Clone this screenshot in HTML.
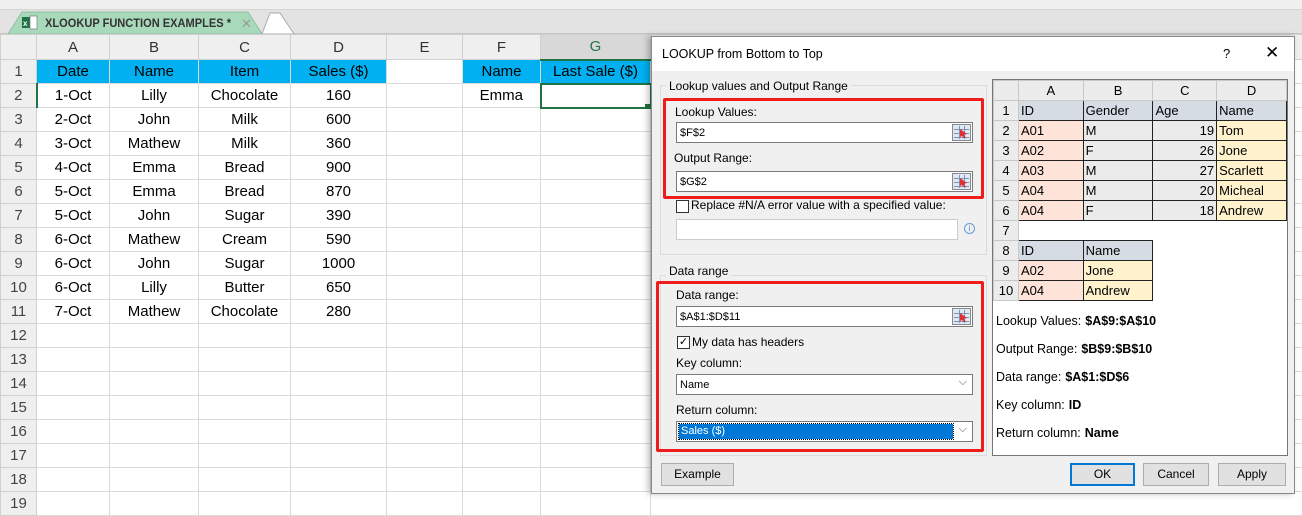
<!DOCTYPE html>
<html><head><meta charset="utf-8"><style>
*{box-sizing:border-box;margin:0;padding:0}
body{width:1302px;height:497px;overflow:hidden;background:#fff;position:relative;font-family:"Liberation Sans",sans-serif}
.a{position:absolute}
#top{left:0;top:0;width:1302px;height:10px;background:#f0f0f0;border-bottom:1px solid #d4d4d4}
#tabbar{left:0;top:10px;width:1302px;height:24px;background:#e3e3e3;border-bottom:1px solid #c6c6c6}
table.s{position:absolute;left:0;top:34px;border-collapse:collapse;table-layout:fixed;font-size:15px;color:#000;width:1302px}
table.s td{border:1px solid #dadada;height:24px;text-align:center;padding:0;white-space:nowrap;overflow:hidden}
table.s tr:first-child td{background:#efefef;color:#333;height:25px;border-color:#d0d0d0}
table.s td.h{background:#efefef;color:#444;border-color:#d0d0d0}
.b{background:#00b0f0}
#dlg{left:651px;top:36px;width:644px;height:458px;background:#f0f0f0;border:1px solid #888;box-shadow:-3px 0 6px rgba(0,0,0,.25);font-family:"Liberation Sans",sans-serif;font-size:12px;color:#000}
.grp{position:absolute;border:1px solid #dcdcdc}
.gl{position:absolute;background:#f0f0f0;padding:0 3px;font-size:12px}
.red{position:absolute;border:3px solid #f01c1c;border-radius:2px}
.inp{position:absolute;background:#fff;border:1px solid #7a7a7a;font-size:11px;padding:4px 3px;height:21px}
.rb{position:absolute;right:1px;top:1px;width:19px;height:17px;border:1px solid #888;background:#dfe8f3}
.lab{position:absolute;font-size:12px}
.chk{position:absolute;width:13px;height:13px;border:1px solid #333;background:#fff}
.btn{position:absolute;height:23px;border:1px solid #adadad;background:#e1e1e1;text-align:center;line-height:21px;font-size:12px}
.pv{position:absolute;left:340px;top:42px;width:296px;height:377px;background:#fff;border:1px solid #777}
table.p{border-collapse:collapse;table-layout:fixed;font-size:13px}
table.p td{height:20px;border:1px solid #d4d4d4;padding:0 2px;white-space:nowrap}
table.p tr:first-child td{background:#ececec;text-align:center;border-color:#c8c8c8}
table.p td.h{background:#ececec;text-align:center;border-color:#c8c8c8}
.k td.x{border:1px solid #222}
.pk{background:#fde3d8}.gy{background:#ebebeb}.yl{background:#fff2cc}.hd{background:#d6dce4}
.sm{position:absolute;left:3px;font-size:12.5px}
.sm b{margin-left:4px}
</style></head><body>
<div class="a" id="top"></div>
<div class="a" id="tabbar"></div>
<svg class="a" style="left:0;top:10px" width="300" height="25">
<polygon points="8,24 22,2 248,2 262,24" fill="#a9d9bb" stroke="#8fbfa1"/>
<polygon points="262,24 270,3 280,3 294,24" fill="#fff" stroke="#aaa"/>
<rect x="22" y="7" width="8" height="11" fill="#1e7145"/><text x="23" y="16" font-size="8" fill="#fff" font-family="Liberation Sans" font-weight="bold">x</text>
<rect x="30" y="6" width="7" height="13" fill="#fff" stroke="#777" stroke-width=".7"/>
<text x="45" y="17" font-size="12" font-family="Liberation Sans" font-weight="bold" fill="#333" textLength="186" lengthAdjust="spacingAndGlyphs">XLOOKUP FUNCTION EXAMPLES *</text>
<text x="241" y="18" font-size="13" fill="#999" font-family="DejaVu Sans">✕</text>
</svg>
<table class="s">
<colgroup><col style="width:36px"><col style="width:73px"><col style="width:89px"><col style="width:92px"><col style="width:96px"><col style="width:76px"><col style="width:78px"><col style="width:110px"><col style="width:652px"></colgroup>
<tr><td style="background:#efefef"></td><td>A</td><td>B</td><td>C</td><td>D</td><td>E</td><td>F</td><td style="background:#d8d8d8;color:#217346;border-bottom:2px solid #217346">G</td><td></td></tr>
<tr><td class="h">1</td><td class="b">Date</td><td class="b">Name</td><td class="b">Item</td><td class="b">Sales ($)</td><td></td><td class="b">Name</td><td class="b">Last Sale ($)</td><td></td></tr>
<tr><td class="h" style="border-right:2px solid #217346">2</td><td>1-Oct</td><td>Lilly</td><td>Chocolate</td><td>160</td><td></td><td>Emma</td><td style="border:2px solid #217346"></td><td></td></tr>
<tr><td class="h">3</td><td>2-Oct</td><td>John</td><td>Milk</td><td>600</td><td></td><td></td><td></td><td></td></tr>
<tr><td class="h">4</td><td>3-Oct</td><td>Mathew</td><td>Milk</td><td>360</td><td></td><td></td><td></td><td></td></tr>
<tr><td class="h">5</td><td>4-Oct</td><td>Emma</td><td>Bread</td><td>900</td><td></td><td></td><td></td><td></td></tr>
<tr><td class="h">6</td><td>5-Oct</td><td>Emma</td><td>Bread</td><td>870</td><td></td><td></td><td></td><td></td></tr>
<tr><td class="h">7</td><td>5-Oct</td><td>John</td><td>Sugar</td><td>390</td><td></td><td></td><td></td><td></td></tr>
<tr><td class="h">8</td><td>6-Oct</td><td>Mathew</td><td>Cream</td><td>590</td><td></td><td></td><td></td><td></td></tr>
<tr><td class="h">9</td><td>6-Oct</td><td>John</td><td>Sugar</td><td>1000</td><td></td><td></td><td></td><td></td></tr>
<tr><td class="h">10</td><td>6-Oct</td><td>Lilly</td><td>Butter</td><td>650</td><td></td><td></td><td></td><td></td></tr>
<tr><td class="h">11</td><td>7-Oct</td><td>Mathew</td><td>Chocolate</td><td>280</td><td></td><td></td><td></td><td></td></tr>
<tr><td class="h">12</td><td></td><td></td><td></td><td></td><td></td><td></td><td></td><td></td></tr>
<tr><td class="h">13</td><td></td><td></td><td></td><td></td><td></td><td></td><td></td><td></td></tr>
<tr><td class="h">14</td><td></td><td></td><td></td><td></td><td></td><td></td><td></td><td></td></tr>
<tr><td class="h">15</td><td></td><td></td><td></td><td></td><td></td><td></td><td></td><td></td></tr>
<tr><td class="h">16</td><td></td><td></td><td></td><td></td><td></td><td></td><td></td><td></td></tr>
<tr><td class="h">17</td><td></td><td></td><td></td><td></td><td></td><td></td><td></td><td></td></tr>
<tr><td class="h">18</td><td></td><td></td><td></td><td></td><td></td><td></td><td></td><td></td></tr>
<tr><td class="h">19</td><td></td><td></td><td></td><td></td><td></td><td></td><td></td><td></td></tr>
</table>
<div class="a" style="left:645px;top:104px;width:5px;height:5px;background:#217346"></div>

<div class="a" id="dlg">
<div class="a" style="left:0;top:0;width:642px;height:34px;background:#fff"></div>
<div class="lab" style="left:10px;top:10px;font-size:12.5px">LOOKUP from Bottom to Top</div>
<div class="lab" style="left:571px;top:9px;font-size:13px">?</div>
<div class="lab" style="left:613px;top:6px;font-size:17px">✕</div>

<div class="grp" style="left:8px;top:48px;width:327px;height:170px"></div>
<div class="gl" style="left:14px;top:42px">Lookup values and Output Range</div>
<div class="red" style="left:11px;top:61px;width:321px;height:101px"></div>
<div class="lab" style="left:23px;top:68px">Lookup Values:</div>
<div class="inp" style="left:24px;top:85px;width:297px">$F$2<div class="rb"><svg width="17" height="15"><g stroke="#7b93b5" stroke-width="1"><line x1="1" y1="4.5" x2="16" y2="4.5"/><line x1="1" y1="8.5" x2="16" y2="8.5"/><line x1="1" y1="12.5" x2="16" y2="12.5"/><line x1="6.5" y1="1" x2="6.5" y2="14"/><line x1="11.5" y1="1" x2="11.5" y2="14"/></g><path d="M7 4 L14 9 L11 10 L13 13 L11 13 L9 11 L7 12 Z" fill="#e03030"/></svg></div></div>
<div class="lab" style="left:22px;top:114px">Output Range:</div>
<div class="inp" style="left:24px;top:134px;width:297px">$G$2<div class="rb"><svg width="17" height="15"><g stroke="#7b93b5" stroke-width="1"><line x1="1" y1="4.5" x2="16" y2="4.5"/><line x1="1" y1="8.5" x2="16" y2="8.5"/><line x1="1" y1="12.5" x2="16" y2="12.5"/><line x1="6.5" y1="1" x2="6.5" y2="14"/><line x1="11.5" y1="1" x2="11.5" y2="14"/></g><path d="M7 4 L14 9 L11 10 L13 13 L11 13 L9 11 L7 12 Z" fill="#e03030"/></svg></div></div>
<div class="chk" style="left:24px;top:163px"></div>
<div class="lab" style="left:39px;top:161px">Replace #N/A error value with a specified value:</div>
<div class="inp" style="left:24px;top:182px;width:282px;border-color:#ccc"></div>
<div class="a" style="left:312px;top:186px;width:11px;height:11px;border:1px solid #6a9bd8;border-radius:50%;font-size:8px;color:#4a7fc8;text-align:center;line-height:9px">i</div>

<div class="grp" style="left:8px;top:238px;width:327px;height:181px"></div>
<div class="gl" style="left:14px;top:227px">Data range</div>
<div class="red" style="left:4px;top:244px;width:328px;height:171px"></div>
<div class="lab" style="left:24px;top:251px">Data range:</div>
<div class="inp" style="left:24px;top:269px;width:297px">$A$1:$D$11<div class="rb"><svg width="17" height="15"><g stroke="#7b93b5" stroke-width="1"><line x1="1" y1="4.5" x2="16" y2="4.5"/><line x1="1" y1="8.5" x2="16" y2="8.5"/><line x1="1" y1="12.5" x2="16" y2="12.5"/><line x1="6.5" y1="1" x2="6.5" y2="14"/><line x1="11.5" y1="1" x2="11.5" y2="14"/></g><path d="M7 4 L14 9 L11 10 L13 13 L11 13 L9 11 L7 12 Z" fill="#e03030"/></svg></div></div>
<div class="chk" style="left:25px;top:299px;font-size:11px;line-height:11px;text-align:center">✓</div>
<div class="lab" style="left:40px;top:298px">My data has headers</div>
<div class="lab" style="left:24px;top:319px">Key column:</div>
<div class="inp" style="left:24px;top:337px;width:297px">Name<span style="position:absolute;right:5px;top:1px;color:#555">⌵</span></div>
<div class="lab" style="left:24px;top:366px">Return column:</div>
<div class="inp" style="left:24px;top:384px;width:297px;padding:2px"><div style="background:#0078d7;color:#fff;width:274px;height:15px;padding-left:2px;outline:1px dotted #000;line-height:15px">Sales ($)</div><span style="position:absolute;right:5px;top:1px;color:#555">⌵</span></div>

<div class="btn" style="left:9px;top:426px;width:73px">Example</div>
<div class="btn" style="left:418px;top:426px;width:65px;border:2px solid #0078d7;line-height:19px">OK</div>
<div class="btn" style="left:491px;top:426px;width:66px">Cancel</div>
<div class="btn" style="left:566px;top:426px;width:68px">Apply</div>

<div class="pv">
<table class="p k">
<colgroup><col style="width:25px"><col style="width:65px"><col style="width:70px"><col style="width:64px"><col style="width:70px"></colgroup>
<tr><td style="background:#ececec"></td><td>A</td><td>B</td><td>C</td><td>D</td></tr>
<tr><td class="h">1</td><td class="x hd">ID</td><td class="x hd">Gender</td><td class="x hd">Age</td><td class="x hd">Name</td></tr>
<tr><td class="h">2</td><td class="x pk">A01</td><td class="x gy">M</td><td class="x gy" style="text-align:right">19</td><td class="x yl">Tom</td></tr>
<tr><td class="h">3</td><td class="x pk">A02</td><td class="x gy">F</td><td class="x gy" style="text-align:right">26</td><td class="x yl">Jone</td></tr>
<tr><td class="h">4</td><td class="x pk">A03</td><td class="x gy">M</td><td class="x gy" style="text-align:right">27</td><td class="x yl">Scarlett</td></tr>
<tr><td class="h">5</td><td class="x pk">A04</td><td class="x gy">M</td><td class="x gy" style="text-align:right">20</td><td class="x yl">Micheal</td></tr>
<tr><td class="h">6</td><td class="x pk">A04</td><td class="x gy">F</td><td class="x gy" style="text-align:right">18</td><td class="x yl">Andrew</td></tr>
<tr><td class="h">7</td><td style="border:none"></td><td style="border:none"></td><td style="border:none"></td><td style="border:none"></td></tr>
<tr><td class="h">8</td><td class="x hd">ID</td><td class="x hd">Name</td><td style="border:none"></td><td style="border:none"></td></tr>
<tr><td class="h">9</td><td class="x pk">A02</td><td class="x yl">Jone</td><td style="border:none"></td><td style="border:none"></td></tr>
<tr><td class="h">10</td><td class="x pk">A04</td><td class="x yl">Andrew</td><td style="border:none"></td><td style="border:none"></td></tr>
</table>
<div class="sm" style="top:234px">Lookup Values:<b>$A$9:$A$10</b></div>
<div class="sm" style="top:262px">Output Range:<b>$B$9:$B$10</b></div>
<div class="sm" style="top:290px">Data range:<b>$A$1:$D$6</b></div>
<div class="sm" style="top:318px">Key column:<b>ID</b></div>
<div class="sm" style="top:346px">Return column:<b>Name</b></div>
</div>
</div>
</body></html>
